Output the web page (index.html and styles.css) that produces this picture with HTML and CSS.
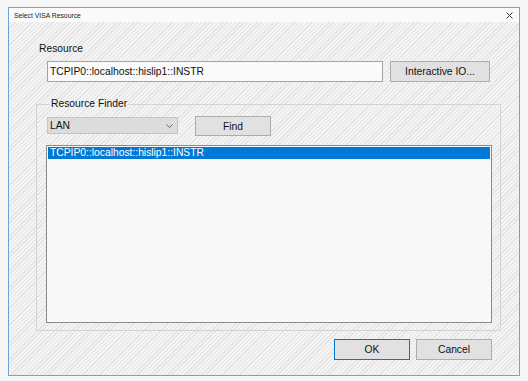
FILE: index.html
```html
<!DOCTYPE html>
<html>
<head>
<meta charset="utf-8">
<link rel="stylesheet" href="styles.css">
</head>
<body>
<div class="window">
  <div class="titlebar">
    <span class="title">Select VISA Resource</span>
    <svg class="close" width="7" height="7" viewBox="0 0 7 7"><path d="M0.5 0.5L6.5 6.5M6.5 0.5L0.5 6.5" stroke="#3a3a3a" stroke-width="1" fill="none"/></svg>
  </div>
  <div class="client">
    <div class="label">Resource</div>
    <div class="resource-row">
      <div class="textbox">TCPIP0::localhost::hislip1::INSTR</div>
      <div class="button io">Interactive IO...</div>
    </div>
    <fieldset class="group">
      <legend class="legend">Resource Finder</legend>
      <div class="finder-row">
        <div class="combo">
          <span>LAN</span>
          <svg class="chev" width="7" height="4" viewBox="0 0 7 4"><path d="M0.5 0.5L3.5 3.5L6.5 0.5" stroke="#6a6a6a" stroke-width="1" fill="none"/></svg>
        </div>
        <div class="button find">Find</div>
      </div>
      <div class="listbox">
        <div class="item selected">TCPIP0::localhost::hislip1::INSTR</div>
      </div>
    </fieldset>
    <div class="actions">
      <div class="button default">OK</div>
      <div class="button">Cancel</div>
    </div>
  </div>
</div>
</body>
</html>
```
FILE: styles.css
```css
html, body {
  margin: 0;
  padding: 0;
}
body {
  background: #f6f6f6;
  padding: 7px 0 0 8px;
  font-family: "Liberation Sans", Arial, sans-serif;
  font-size: 10.3px;
  color: #111;
}
.window {
  width: 510px;
  height: 367px;
  border: 1px solid #6ea3dd;
  display: flex;
  flex-direction: column;
  background-color: #ededed;
  background-image: repeating-linear-gradient(135deg, #f4f4f4 0 2px, #e3e3e3 2px 3px);
}
.titlebar {
  height: 14px;
  background: #fafafa;
  display: flex;
  align-items: center;
  justify-content: space-between;
  padding: 0 6px 0 5px;
}
.title {
  font-size: 6.8px;
  color: #222;
}
.close {
  display: block;
}
.client {
  flex: 1;
  display: flex;
  flex-direction: column;
  padding: 21px 0 0 27px;
}
.label {
  line-height: 12px;
  margin-left: 3px;
}
.resource-row {
  display: flex;
  gap: 7px;
  margin: 6px 0 0 11px;
  height: 21px;
}
.textbox {
  width: 334px;
  border: 1px solid #a3a3a3;
  background: #fafafa;
  display: flex;
  align-items: center;
  padding-left: 2px;
  box-sizing: border-box;
  width: 336px;
}
.button {
  box-sizing: border-box;
  border: 1px solid #adadad;
  background: #e1e1e1;
  display: flex;
  align-items: center;
  justify-content: center;
}
.io {
  width: 100px;
}
.group {
  margin: 16px 0 0 0;
  width: 465px;
  box-sizing: border-box;
  border: 1px solid #d3d3d3;
  padding: 6px 8px 7px 9px;
}
.legend {
  line-height: 12px;
  padding: 0 1px;
  margin-left: 4px;
}
.finder-row {
  display: flex;
  align-items: flex-start;
  gap: 17px;
  margin-left: 1px;
}
.combo {
  margin-top: 1px;
  width: 131px;
  height: 17px;
  box-sizing: border-box;
  border: 1px solid #c4c4c4;
  background: #dcdcdc;
  display: flex;
  align-items: center;
  justify-content: space-between;
  padding: 0 4px 0 2px;
}
.chev {
  display: block;
}
.find {
  width: 76px;
  height: 20px;
}
.listbox {
  margin-top: 9px;
  height: 178px;
  box-sizing: border-box;
  border: 1px solid #8a8a8a;
  background: #f8f8f8;
  padding: 1px;
}
.item {
  height: 12px;
  line-height: 12px;
  padding-left: 2px;
}
.selected {
  background: #0078d7;
  color: #fff;
}
.actions {
  display: flex;
  justify-content: flex-end;
  gap: 6px;
  margin: 8px 27px 0 0;
}
.actions .button {
  width: 76px;
  height: 21px;
}
.default {
  border-color: #0078d7;
}
```
